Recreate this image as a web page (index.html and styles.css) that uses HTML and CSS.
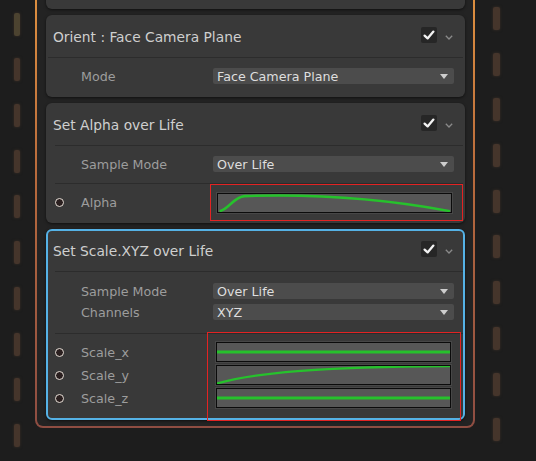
FILE: index.html
```html
<!DOCTYPE html>
<html>
<head>
<meta charset="utf-8">
<link rel="stylesheet" href="styles.css">
</head>
<body>
<div class="stage">
  <div class="rail rail-left">
    <span class="dash dash-first"></span><span class="dash"></span><span class="dash"></span><span class="dash"></span><span class="dash"></span>
    <span class="dash"></span><span class="dash"></span><span class="dash"></span><span class="dash"></span><span class="dash"></span>
  </div>

  <div class="frame">
    <div class="frame-inner">
      <div class="card card-stub"></div>

      <div class="card">
        <div class="card-head">
          <span class="title">Orient : Face Camera Plane</span>
          <span class="check"><svg viewBox="0 0 16 16" width="16" height="16"><path d="M3.6 8.6 L6.6 11.4 L12.4 4.6" fill="none" stroke="#f2f2f2" stroke-width="2.3" stroke-linecap="round" stroke-linejoin="round"/></svg></span>
          <span class="chev"><svg viewBox="0 0 8 5" width="8" height="5"><polyline points="0.8,0.8 4,4 7.2,0.8" fill="none" stroke="#8a8a8a" stroke-width="1.3"/></svg></span>
        </div>
        <div class="sep"></div>
        <div class="card-body">
          <div class="row">
            <span class="label">Mode</span>
            <span class="dropdown"><span>Face Camera Plane</span><span class="tri"></span></span>
          </div>
        </div>
      </div>

      <div class="card">
        <div class="card-head">
          <span class="title">Set Alpha over Life</span>
          <span class="check"><svg viewBox="0 0 16 16" width="16" height="16"><path d="M3.6 8.6 L6.6 11.4 L12.4 4.6" fill="none" stroke="#f2f2f2" stroke-width="2.3" stroke-linecap="round" stroke-linejoin="round"/></svg></span>
          <span class="chev"><svg viewBox="0 0 8 5" width="8" height="5"><polyline points="0.8,0.8 4,4 7.2,0.8" fill="none" stroke="#8a8a8a" stroke-width="1.3"/></svg></span>
        </div>
        <div class="sep inset"></div>
        <div class="card-body">
          <div class="row">
            <span class="label">Sample Mode</span>
            <span class="dropdown"><span>Over Life</span><span class="tri"></span></span>
          </div>
        </div>
        <div class="sep inset"></div>
        <div class="ports ports-alpha">
          <div class="port-col port-col-alpha">
            <div class="port-row"><span class="port"></span><span class="port-label">Alpha</span></div>
          </div>
          <div class="highlight highlight-alpha">
            <div class="curve">
              <svg viewBox="0 0 232 17" preserveAspectRatio="none"><path d="M1.5 16.2 C 10 15, 16 2.5, 26.5 2 C 78 0.3, 148 1.5, 231 16.2" fill="none" stroke="#26c22c" stroke-width="2.4"/></svg>
            </div>
          </div>
        </div>
      </div>

      <div class="card card-selected">
        <div class="card-head">
          <span class="title">Set Scale.XYZ over Life</span>
          <span class="check"><svg viewBox="0 0 16 16" width="16" height="16"><path d="M3.6 8.6 L6.6 11.4 L12.4 4.6" fill="none" stroke="#f2f2f2" stroke-width="2.3" stroke-linecap="round" stroke-linejoin="round"/></svg></span>
          <span class="chev"><svg viewBox="0 0 8 5" width="8" height="5"><polyline points="0.8,0.8 4,4 7.2,0.8" fill="none" stroke="#8a8a8a" stroke-width="1.3"/></svg></span>
        </div>
        <div class="sep inset"></div>
        <div class="card-body card-body-two">
          <div class="row">
            <span class="label">Sample Mode</span>
            <span class="dropdown"><span>Over Life</span><span class="tri"></span></span>
          </div>
          <div class="row">
            <span class="label">Channels</span>
            <span class="dropdown"><span>XYZ</span><span class="tri"></span></span>
          </div>
        </div>
        <div class="sep inset"></div>
        <div class="ports ports-scale">
          <div class="port-col port-col-scale">
            <div class="port-row small"><span class="port"></span><span class="port-label">Scale_x</span></div>
            <div class="port-row small"><span class="port"></span><span class="port-label">Scale_y</span></div>
            <div class="port-row small"><span class="port"></span><span class="port-label">Scale_z</span></div>
          </div>
          <div class="highlight highlight-scale">
            <div class="curve">
              <svg viewBox="0 0 232 17" preserveAspectRatio="none"><path d="M0 8.5 L232 8.5" fill="none" stroke="#26c22c" stroke-width="2.6"/></svg>
            </div>
            <div class="curve">
              <svg viewBox="0 0 232 17" preserveAspectRatio="none"><path d="M0 16.5 C 38 6.5, 98 0.8, 232 0" fill="none" stroke="#26c22c" stroke-width="2.2"/></svg>
            </div>
            <div class="curve">
              <svg viewBox="0 0 232 17" preserveAspectRatio="none"><path d="M0 8.5 L232 8.5" fill="none" stroke="#26c22c" stroke-width="2.6"/></svg>
            </div>
          </div>
        </div>
      </div>
    </div>
  </div>

  <div class="rail rail-right">
    <span class="dash"></span><span class="dash"></span><span class="dash"></span><span class="dash"></span><span class="dash"></span>
    <span class="dash"></span><span class="dash"></span><span class="dash"></span><span class="dash"></span><span class="dash"></span>
  </div>
</div>
</body>
</html>
```

FILE: styles.css
```css
* { box-sizing: border-box; }

html, body {
  margin: 0;
  padding: 0;
  background: #1d1d1d;
}

body {
  width: 536px;
  height: 461px;
  overflow: hidden;
  font-family: "DejaVu Sans", Verdana, sans-serif;
}

.stage {
  display: flex;
  height: 461px;
  overflow: hidden;
}

.rail {
  flex: none;
  display: flex;
  flex-direction: column;
  gap: 22.7px;
}

.rail-left {
  width: 35px;
  padding-left: 14px;
  padding-top: 12.7px;
}

.rail-right {
  flex: 1;
  padding-left: 18px;
  padding-top: 7px;
}

.dash {
  display: block;
  width: 6px;
  height: 23px;
  flex: none;
  border-radius: 2px;
  background: #45352b;
  box-shadow: 0 0 3px rgba(80, 60, 45, 0.6);
}

.rail-right .dash {
  width: 7px;
}

.dash-first {
  background: #4c4330;
}

.frame {
  flex: none;
  width: 440px;
  align-self: flex-start;
  margin-top: -30px;
  padding: 2px;
  border-radius: 8px;
  background: linear-gradient(to bottom, #e39540 0%, #b86a3c 45%, #8e4d42 100%);
}

.frame-inner {
  background: #232323;
  border-radius: 6px;
  padding: 0 8px 6px 9px;
  display: flex;
  flex-direction: column;
  gap: 6px;
}

.card {
  border: 2px solid transparent;
  border-radius: 6px;
  background: #393939;
  box-shadow: 0 1px 3px rgba(0, 0, 0, 0.55);
}

.card-stub {
  height: 37px;
  border-top-left-radius: 0;
  border-top-right-radius: 0;
}

.card-selected {
  border-color: #55b2e6;
}

.card-head {
  height: 40px;
  display: flex;
  align-items: center;
  padding: 0 10px 0 5px;
}

.title {
  flex: 1;
  font-size: 13.8px;
  color: #cfcfcf;
  white-space: nowrap;
}

.check {
  width: 16px;
  height: 16px;
  background: #262626;
  border-radius: 2px;
  margin-bottom: 4px;
  display: flex;
}

.check svg { display: block; }

.chev {
  margin-left: 8px;
  display: flex;
}

.chev svg { display: block; }

.sep {
  height: 1px;
  background: #2c2c2c;
}

.sep.inset {
  margin-left: 7px;
}

.card-body {
  padding: 10px 9px 11px 0;
  display: flex;
  flex-direction: column;
  gap: 5px;
}

.card-body-two {
  padding-top: 11px;
  padding-bottom: 13px;
}

.row {
  display: flex;
  align-items: center;
  height: 16px;
}

.label {
  width: 165px;
  flex: none;
  padding-left: 33px;
  font-size: 12.7px;
  color: #9d9d9d;
  white-space: nowrap;
}

.dropdown {
  flex: 1;
  height: 16px;
  background: #4c4c4c;
  border-radius: 2px;
  display: flex;
  align-items: center;
  justify-content: space-between;
  padding: 0 6px 0 4px;
  font-size: 12.7px;
  color: #dedede;
  white-space: nowrap;
}

.tri {
  width: 0;
  height: 0;
  border-left: 4px solid transparent;
  border-right: 4px solid transparent;
  border-top: 5px solid #cdcdcd;
}

.ports {
  display: flex;
  align-items: flex-start;
}

.ports-alpha {
  height: 37px;
}

.ports-scale {
  height: 84px;
}

.port-col {
  flex: none;
  display: flex;
  flex-direction: column;
  gap: 3px;
}

.port-col-alpha {
  width: 162px;
}

.port-col-scale {
  width: 159px;
  padding-top: 8px;
}

.port-row {
  height: 37px;
  display: flex;
  align-items: center;
}

.port-row.small {
  height: 20px;
}

.port {
  width: 9px;
  height: 9px;
  margin-left: 7px;
  border-radius: 50%;
  border: 1.5px solid #e6ded6;
  background: #2a1f1f;
  flex: none;
}

.port-label {
  margin-left: 17px;
  font-size: 12.7px;
  color: #9d9d9d;
  white-space: nowrap;
}

.highlight {
  flex: none;
  border: 1.5px solid #e32323;
  display: flex;
  flex-direction: column;
  gap: 3px;
}

.highlight-alpha {
  width: 253px;
  height: 37px;
  padding: 7.5px 9.5px 6.5px 5.5px;
}

.highlight-scale {
  width: 254px;
  height: 89px;
  margin-top: -2px;
  padding: 8.5px 8.5px 11.5px 7.5px;
}

.curve {
  width: 235px;
  height: 20px;
  flex: none;
  border: 1.5px solid #0b0b0b;
  background: #575757;
  box-shadow: 0 0 0 1px #474747;
}

.curve svg {
  display: block;
  width: 100%;
  height: 100%;
}
```
